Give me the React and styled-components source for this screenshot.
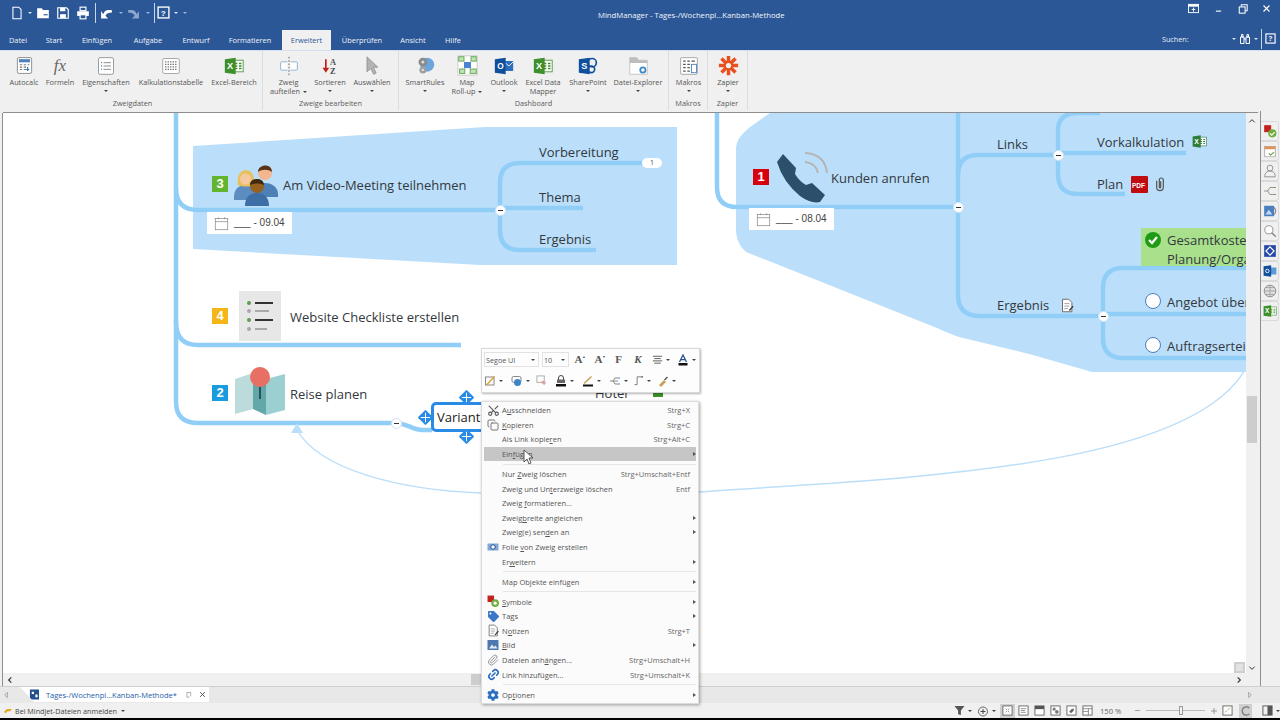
import React from 'react';
import styled, { createGlobalStyle } from 'styled-components';
import { Scissors, Copy, Paperclip, Link2 } from 'lucide-react';
import { FaCog, FaTag } from 'react-icons/fa';

const UI = '"Open Sans", "Noto Sans", sans-serif';
const BLUE = '#2b5797';
const BRANCH = '#90cef8';
const SOFT = '#bcdff9';

let Global = createGlobalStyle`
    html, body { margin: 0; padding: 0; overflow: hidden; background: #000; }
    * { box-sizing: border-box; }
`;

let Page = styled.div`
    position: relative;
    width: 1280px;
    height: 720px;
    display: flex;
    flex-direction: column;
    overflow: hidden;
    font-family: ${UI};
    background: #f0f0f0;
`;

let TitleBar = styled.div`
    height: 25px;
    display: flex;
    align-items: center;
    background: ${BLUE};
    color: #fff;
`;
let Slot = styled.div`
    width: ${p => p.$w}px;
    margin-left: ${p => p.$ml || 0}px;
    display: flex;
    align-items: center;
    justify-content: center;
    gap: ${p => p.$gap ?? 4}px;
    flex: none;
`;
let QatSep = styled.div`
    width: 1px;
    height: 20px;
    margin-left: 2px;
    background: #c9d5e8;
`;
let WindowTitle = styled.div`
    margin-left: 408px;
    width: 190px;
    padding-top: 4px;
    font-size: 7.7px;
    white-space: nowrap;
    color: #f2f5fa;
`;
let WindowBtns = styled.div`
    margin-left: auto;
    align-self: flex-start;
    padding: 3px 3px 0 0;
    display: flex;
    align-items: center;
`;
let Caret = styled.span`
    display: inline-block;
    width: 0;
    height: 0;
    flex: none;
    border-left: 2px solid transparent;
    border-right: 2px solid transparent;
    border-top: 2px solid ${p => p.$c || '#444'};
`;

let TabBar = styled.div`
    height: 25px;
    display: flex;
    align-items: stretch;
    background: ${BLUE};
`;
let Tab = styled.div`
    width: ${p => p.$w}px;
    display: flex;
    align-items: center;
    justify-content: center;
    font-size: 7.4px;
    flex: none;
    color: ${p => (p.$active ? BLUE : '#eef2f8')};
    background: ${p => (p.$active ? '#f0f0f0' : 'transparent')};
    margin-top: ${p => (p.$active ? '5px' : '0')};
    padding-top: ${p => (p.$active ? '0' : '5px')};
`;
let SearchBox = styled.div`
    margin-left: auto;
    display: flex;
    align-items: center;
    padding-top: 2px;
    color: #e8edf6;
    font-size: 7.2px;
    padding-right: 2px;
`;
let SearchLabel = styled.span`
    width: 68px;
`;

let Ribbon = styled.div`
    height: 61px;
    display: flex;
    background: #f0f0f0;
    border-top: 1px solid #d6dfee;
    padding-left: ${p => p.$pl || 0}px;
`;
let Group = styled.div`
    width: ${p => p.$w}px;
    flex: none;
    display: flex;
    flex-direction: column;
    border-right: 1px solid #dcdcdc;
    margin-bottom: 1px;
`;
let GroupItems = styled.div`
    flex: 1;
    display: flex;
    padding-top: 2px;
`;
let GroupLabel = styled.div`
    height: 13px;
    text-align: center;
    font-size: 7.3px;
    color: #5c5c5c;
    line-height: 12px;
`;
let Item = styled.div`
    width: ${p => p.$w}px;
    flex: none;
    display: flex;
    flex-direction: column;
    align-items: center;
    color: #555;
    font-size: 7.3px;
    line-height: 8.6px;
    white-space: nowrap;
    text-align: center;
`;
let ItemIcon = styled.div`
    height: 25px;
    display: flex;
    align-items: center;
    justify-content: center;
`;
let FxMark = styled.span`
    font: italic 17px "Liberation Serif", serif;
    color: #666;
`;
let ItemCaret = styled(Caret)`
    margin-top: 3px;
`;
let InlineCaret = styled(Caret)`
    margin-left: 3px;
    vertical-align: middle;
`;

let Workspace = styled.div`
    height: 575px;
    display: flex;
    background: #f0f0f0;
`;
let LeftEdge = styled.div`
    width: 3px;
    border-right: 1px solid #8e8e8e;
    margin-top: 2px;
`;
let CenterCol = styled.div`
    width: 1243px;
    display: flex;
    flex-direction: column;
`;
let Canvas = styled.div`
    position: relative;
    flex: 1;
    margin-top: 1px;
    border-top: 1px solid #8e8e8e;
    background: #fff;
    overflow: hidden;
`;
let Wires = styled.svg`
    position: absolute;
    left: 0;
    top: 0;
`;
let HScroll = styled.div`
    height: 13px;
    display: flex;
    align-items: center;
    background: #f0f0f0;
    color: #333;
    font-size: 8px;
    padding: 0 2px 0 3px;
`;
let HThumb = styled.div`
    width: 225px;
    height: 11px;
    margin-left: 457px;
    background: #cdcdcd;
`;
let HEnd = styled.div`
    margin-left: auto;
    padding-right: 1px;
    display: flex;
`;
let VScroll = styled.div`
    width: 12px;
    display: flex;
    flex-direction: column;
    align-items: center;
    margin-top: 1px;
    border-top: 1px solid #8e8e8e;
    padding-top: 4px;
    background: #f0f0f0;
`;
let VThumb = styled.div`
    width: 10px;
    height: 47px;
    margin-top: 271px;
    background: #cdcdcd;
`;
let VEnd = styled.div`
    margin-top: auto;
    margin-bottom: 9px;
`;
let SidePanel = styled.div`
    width: 22px;
    display: flex;
    flex-direction: column;
    align-items: flex-end;
    padding: 10px 1px 0 0;
    background: #f0f0f0;
    position: relative;
    box-shadow: inset 2px 0 0 #f0f0f0, inset 3px 0 0 #8e8e8e;
`;
let SideTab = styled.div`
    width: 18px;
    height: 20px;
    display: flex;
    align-items: center;
    justify-content: center;
    border: 1px solid #dadada;
    border-left: none;
    border-radius: 0 3px 3px 0;
`;

let TabStrip = styled.div`
    height: 17px;
    display: flex;
    align-items: center;
    background: #e8e8e8;
    border-top: 1px solid #cfcfcf;
    color: #777;
`;
let StripArrow = styled.div`
    width: 20px;
    padding-left: 2px;
    display: flex;
`;
let DocTab = styled.div`
    width: 189px;
    height: 15px;
    display: flex;
    align-items: center;
    background: #fff;
    padding-left: 9px;
    clip-path: polygon(0 0, 100% 0, 100% 100%, 14px 100%);
    margin-top: -1px;
`;
let DocName = styled.span`
    margin-left: 6px;
    width: 138px;
    font-size: 7.5px;
    color: #1d5ea8;
    white-space: nowrap;
`;
let StripEnd = styled.div`
    margin-left: auto;
    padding-right: 26px;
    display: flex;
`;

let StatusBar = styled.div`
    height: 15px;
    display: flex;
    align-items: center;
    background: #f0f0f0;
    color: #444;
    font-size: 7.2px;
    padding-left: 2px;
`;
let StatusText = styled.span`
    margin-left: 1px;
    margin-right: 4px;
`;
let StatusRight = styled.div`
    margin-left: auto;
    display: flex;
    align-items: center;
`;
let StatusSlot = styled.div`
    width: ${p => p.$w}px;
    height: 14px;
    flex: none;
    display: flex;
    align-items: center;
    justify-content: center;
    gap: 3px;
    background: ${p => (p.$on ? '#cfcfcf' : 'transparent')};
`;
let ZoomText = styled.span`
    width: 33px;
    flex: none;
    color: #666;
    font-size: 7.6px;
`;
let Slider = styled.div`
    position: relative;
    width: 59px;
    height: 1px;
    margin: 0 4px;
    background: #bcbcbc;
`;
let SliderThumb = styled.div`
    position: absolute;
    left: 33px;
    top: -4px;
    width: 4px;
    height: 9px;
    background: #f4f4f4;
    border: 1px solid #999;
`;
let BlackEdge = styled.div`
    height: 2px;
    background: #000;
`;

/* mind map: coordinates are the node places on the free canvas */
let Label = styled.div`
    position: absolute;
    left: ${p => p.$x - 3}px;
    top: ${p => p.$y - 113}px;
    transform: translateY(-50%);
    font-size: 13px;
    color: #33383e;
    white-space: nowrap;
    line-height: 1;
`;
let Pin = styled.div`
    position: absolute;
    left: ${p => p.$x - 3}px;
    top: ${p => p.$y - 113}px;
    line-height: 0;
`;
let Badge = styled(Pin)`
    width: 16px;
    height: 16px;
    display: flex;
    align-items: center;
    justify-content: center;
    background: ${p => p.$bg};
    color: #fff;
    font: bold 13px/16px "Liberation Sans", sans-serif;
`;
let DateBox = styled(Pin)`
    width: 85px;
    height: 22px;
    display: flex;
    align-items: center;
    padding-left: 7px;
    gap: 5px;
    background: #fff;
    font: 10px/1 "Liberation Sans", sans-serif;
    color: #444;
`;
let CountPill = styled(Pin)`
    width: 20px;
    height: 10px;
    border-radius: 5px;
    background: #fff;
    color: #444;
    text-align: center;
    font-size: 7px;
    line-height: 10px;
`;
let GreenBox = styled(Pin)`
    width: 110px;
    height: 38px;
    background: #a9e08c;
`;
let Collapse = styled(Pin)`
    width: 11px;
    height: 11px;
    margin: -5.5px 0 0 -5.5px;
    border-radius: 50%;
    background: #fff;
    border: 1px solid #cfe4f4;
    display: flex;
    align-items: center;
    justify-content: center;
    &::after {
        content: '';
        width: 5px;
        height: 1px;
        background: #333;
    }
`;
let Selected = styled(Pin)`
    width: 72px;
    height: 30px;
    padding-left: 3px;
    border: 3px solid #2a8be6;
    border-radius: 5px;
    background: #fff;
    color: #222;
    font-size: 13px;
    line-height: 24px;
    white-space: nowrap;
    overflow: hidden;
`;
let Handle = styled(Pin)`
    width: 11px;
    height: 11px;
    margin: -5.5px 0 0 -5.5px;
    border-radius: 1px;
    transform: rotate(45deg);
    background: #2a8be6;
    &::before {
        content: '';
        position: absolute;
        left: 2px;
        top: 2px;
        width: 7px;
        height: 7px;
        background: linear-gradient(135deg, transparent 42%, #fff 42%, #fff 58%, transparent 58%),
            linear-gradient(45deg, transparent 42%, #fff 42%, #fff 58%, transparent 58%);
    }
`;
let CornerBox = styled(Pin)`
    width: 11px;
    height: 11px;
    background: #e2e2e2;
    border: 2px solid #cfcfcf;
`;

/* floating format bar and context menu sit over the map */
let MiniBar = styled.div`
    position: absolute;
    left: 481px;
    top: 348px;
    width: 219px;
    height: 45px;
    padding: 2px 2px;
    display: flex;
    flex-direction: column;
    gap: 4px;
    background: #fdfdfd;
    border: 1px solid #d8d8d8;
    box-shadow: 1px 1px 2px rgba(0, 0, 0, .3);
`;
let MiniRow = styled.div`
    height: 17px;
    display: flex;
    align-items: center;
`;
let Combo = styled.div`
    width: ${p => p.$w}px;
    height: 15px;
    margin-right: ${p => p.$mr || 0}px;
    padding: 0 3px 0 1px;
    display: flex;
    align-items: center;
    justify-content: space-between;
    border: 1px solid #e2e2e2;
    font-size: 7.2px;
    color: #555;
    flex: none;
`;
let Tool = styled.div`
    width: ${p => p.$w}px;
    flex: none;
    display: flex;
    align-items: center;
    justify-content: ${p => (p.$start ? 'flex-start' : 'center')};
    gap: 3px;
    color: #555;
    font: bold 11px/1 "Liberation Serif", serif;
`;
let TinyUp = styled.span`
    width: 0;
    height: 0;
    margin: -6px 0 0 -2px;
    border-left: 1.5px solid transparent;
    border-right: 1.5px solid transparent;
    border-bottom: 2px solid #444;
`;
let TinyDown = styled.span`
    width: 0;
    height: 0;
    margin: -6px 0 0 -2px;
    border-left: 1.5px solid transparent;
    border-right: 1.5px solid transparent;
    border-top: 2px solid #444;
`;

let Menu = styled.div`
    position: absolute;
    left: 481px;
    top: 401px;
    width: 218px;
    padding: 1px 2px;
    background: #fbfbfb;
    border: 1px solid #dcdcdc;
    box-shadow: 1px 1px 3px rgba(0, 0, 0, .35);
`;
let Row = styled.div`
    height: 14.6px;
    display: flex;
    align-items: center;
    font-size: 7.5px;
    color: #555;
    white-space: nowrap;
    background: ${p => (p.$hover ? '#c6c6c6' : 'transparent')};
`;
let RowIcon = styled.div`
    width: 18px;
    flex: none;
    display: flex;
    align-items: center;
    justify-content: center;
`;
let RowLabel = styled.span`
    flex: 1;
`;
let RowKey = styled.span`
    color: #666;
`;
let RowArrow = styled.div`
    width: 6px;
    flex: none;
    display: flex;
    justify-content: flex-end;
`;
let ArrowRight = styled.span`
    width: 0;
    height: 0;
    border-top: 2.5px solid transparent;
    border-bottom: 2.5px solid transparent;
    border-left: 3px solid #555;
`;
let MenuSep = styled.div`
    height: 5.4px;
    display: flex;
    align-items: center;
    padding-left: 19px;
    &::after {
        content: '';
        flex: 1;
        height: 1px;
        background: #e6e6e6;
    }
`;
let UpScissors = styled(Scissors)`
    transform: rotate(-90deg);
`;
let SlantLink = styled(Link2)`
    transform: rotate(-45deg);
`;
let Pointer = styled.svg`
    position: absolute;
    left: 523px;
    top: 449px;
`;

function Svg({ s = 20, h, vb = '0 0 24 24', children }) {
    return <svg width={s} height={h || s} viewBox={vb} fill="none">{children}</svg>;
}

function XlsMark({ s = 20, dark = '#3f8f2b' }) {
    return (
        <Svg s={s}>
            <rect x="10" y="5" width="13" height="14" fill="#fff" stroke={dark} />
            <path d="M13 9h3M18 9h3M13 12h3M18 12h3M13 15h3M18 15h3" stroke={dark} strokeWidth="1.6" />
            <path d="M1 4l13-2v20L1 20z" fill={dark} />
            <text x="3.5" y="16" fontSize="11" fontWeight="bold" fontFamily="Liberation Sans" fill="#fff">X</text>
        </Svg>
    );
}

function ribbonIcon(name) {
    switch (name) {
        case 'calc': return (
            <Svg s={19}>
                <rect x="3" y="2" width="18" height="20" rx="2" fill="#fff" stroke="#777" />
                <rect x="5" y="4" width="14" height="4" fill="#4f81bd" />
                <path d="M6 11h3M11 11h3M16 11h2M6 14h3M11 14h3M6 17h3M11 17h3" stroke="#7a7a7a" strokeWidth="1.4" />
                <path d="M16 14v5M14 17h4" stroke="#2a76c8" strokeWidth="1.4" />
            </Svg>
        );
        case 'fx': return <FxMark>fx</FxMark>;
        case 'list': return (
            <Svg s={20}>
                <rect x="3" y="2" width="18" height="20" rx="2" fill="#fff" stroke="#888" />
                <path d="M6 8h1M6 12h1M6 16h1" stroke="#2a76c8" strokeWidth="1.6" />
                <path d="M9 8h9M9 12h9M9 16h9" stroke="#777" />
            </Svg>
        );
        case 'grid': return (
            <Svg s={20}>
                <rect x="2" y="3" width="20" height="18" rx="2" fill="#fff" stroke="#999" />
                <path d="M5 7h14M5 10h14M5 13h14M5 16h14" stroke="#666" strokeWidth="1.3" strokeDasharray="1.5 1.5" />
            </Svg>
        );
        case 'xls': return <XlsMark s={20} />;
        case 'split': return (
            <Svg s={20}>
                <rect x="2" y="7" width="20" height="10" rx="1" stroke="#7fa6cf" fill="#fff" />
                <rect x="10" y="5" width="4" height="14" fill="#f0f0f0" />
                <path d="M12 1v22" stroke="#555" strokeDasharray="2 2" />
            </Svg>
        );
        case 'sort': return (
            <Svg s={20}>
                <path d="M7 4v13" stroke="#c4211d" strokeWidth="2" />
                <path d="M3 14l4 6 4-6z" fill="#c4211d" />
                <text x="12" y="11" fontSize="10" fontFamily="Liberation Serif" fontWeight="bold" fill="#555">A</text>
                <text x="12" y="22" fontSize="10" fontFamily="Liberation Serif" fontWeight="bold" fill="#444">Z</text>
            </Svg>
        );
        case 'pick': return (
            <Svg s={20}>
                <path d="M6 1v18l4.500-4 3.500 7 3-1.500-3.500-7H19z" fill="#b4b4b4" stroke="#8f8f8f" />
            </Svg>
        );
        case 'rules': return (
            <Svg s={21}>
                <circle cx="14" cy="11" r="8" fill="#6ba5dc" />
                <circle cx="9" cy="8" r="5" fill="#8a8a8a" />
                <circle cx="9" cy="8" r="1.800" fill="#ddd" />
                <circle cx="9" cy="17" r="4" fill="#a0a0a0" />
                <circle cx="9" cy="17" r="1.400" fill="#ddd" />
            </Svg>
        );
        case 'rollup': return (
            <Svg s={21}>
                <rect x="1" y="1" width="22" height="22" fill="#fff" stroke="#c6c6c6" />
                <rect x="2" y="2" width="6" height="5" fill="#bfe3b4" stroke="#5ca04c" />
                <rect x="16" y="2" width="6" height="5" fill="#bfe3b4" stroke="#5ca04c" />
                <rect x="3" y="16" width="6" height="5" fill="#bfe3b4" stroke="#5ca04c" />
                <rect x="15" y="16" width="7" height="5" fill="#bfe3b4" stroke="#5ca04c" />
                <rect x="8" y="8" width="8" height="7" fill="#4a86d0" />
            </Svg>
        );
        case 'outlook': return (
            <Svg s={20}>
                <rect x="12" y="6" width="11" height="12" fill="#2d6fb8" />
                <path d="M12 7l6 5 5-5" stroke="#fff" />
                <path d="M1 4l13-2v20L1 20z" fill="#0f4f9c" />
                <text x="4" y="16" fontSize="10" fontWeight="bold" fontFamily="Liberation Sans" fill="#fff">O</text>
            </Svg>
        );
        case 'share': return (
            <Svg s={20}>
                <circle cx="17" cy="8" r="5" stroke="#0f4f9c" strokeWidth="2" />
                <circle cx="16" cy="16" r="4" stroke="#0f4f9c" strokeWidth="2" />
                <path d="M1 4l13-2v20L1 20z" fill="#0f4f9c" />
                <text x="4" y="16" fontSize="11" fontWeight="bold" fontFamily="Liberation Sans" fill="#fff">S</text>
            </Svg>
        );
        case 'folder': return (
            <Svg s={21}>
                <path d="M2 3h8l2 3h10v16H2z" fill="#fff" stroke="#c0c0c0" />
                <path d="M2 3h8l2 3h10v3H2z" fill="#bdbdbd" />
                <circle cx="17" cy="17" r="3" stroke="#3c88c8" strokeWidth="2" />
            </Svg>
        );
        case 'macro': return (
            <Svg s={20}>
                <rect x="2" y="2" width="20" height="20" rx="1" fill="#fff" stroke="#999" />
                <path d="M5 6h3M10 6h3M15 6h4M5 10h3M10 10h3M5 14h3M10 14h3M5 18h3M10 18h3" stroke="#555" strokeWidth="1.500" />
                <rect x="15" y="10" width="6" height="10" fill="#fff" stroke="#3c78c0" />
            </Svg>
        );
        case 'zapier': return (
            <Svg s={21}>
                <path d="M12 1v22M1 12h22M4 4l16 16M20 4L4 20" stroke="#e8511f" strokeWidth="4" />
                <circle cx="12" cy="12" r="3" fill="#f0f0f0" />
            </Svg>
        );
        default: return null;
    }
}

const ribbonGroups = [
    { w: 260, label: 'Zweigdaten', items: [
        { w: 42, icon: 'calc', text: ['Autocalc'] },
        { w: 30, icon: 'fx', text: ['Formeln'] },
        { w: 62, icon: 'list', text: ['Eigenschaften'], caret: true },
        { w: 68, icon: 'grid', text: ['Kalkulationstabelle'] },
        { w: 58, icon: 'xls', text: ['Excel-Bereich'] },
    ] },
    { w: 136, label: 'Zweige bearbeiten', items: [
        { w: 51, icon: 'split', text: ['Zweig', 'aufteilen'], inline: true },
        { w: 32, icon: 'sort', text: ['Sortieren'], caret: true },
        { w: 52, icon: 'pick', text: ['Auswählen'], caret: true },
    ] },
    { w: 270, label: 'Dashboard', items: [
        { w: 52, icon: 'rules', text: ['SmartRules'], caret: true },
        { w: 32, icon: 'rollup', text: ['Map', 'Roll-up'], inline: true },
        { w: 42, icon: 'outlook', text: ['Outlook'], caret: true },
        { w: 36, icon: 'xls', text: ['Excel Data', 'Mapper'] },
        { w: 54, icon: 'share', text: ['SharePoint'], caret: true },
        { w: 46, icon: 'folder', text: ['Datei-Explorer'], caret: true },
    ] },
    { w: 39, label: 'Makros', items: [{ w: 39, icon: 'macro', text: ['Makros'], caret: true }] },
    { w: 40, label: 'Zapier', items: [{ w: 40, icon: 'zapier', text: ['Zapier'], caret: true }] },
];

const tabs = [
    ['Datei', 36], ['Start', 36], ['Einfügen', 50], ['Aufgabe', 52], ['Entwurf', 44], ['Formatieren', 64],
    ['Erweitert', 49, true], ['Überprüfen', 62], ['Ansicht', 40], ['Hilfe', 40],
];

function RibbonGroup({ group }) {
    return (
        <Group $w={group.w}>
            <GroupItems>
                {group.items.map((item) => (
                    <Item key={item.text[0]} $w={item.w}>
                        <ItemIcon>{ribbonIcon(item.icon)}</ItemIcon>
                        {item.text.map((line, i) => (
                            <div key={line}>{line}{item.inline && i === 1 ? <InlineCaret /> : null}</div>
                        ))}
                        {item.caret ? <ItemCaret /> : null}
                    </Item>
                ))}
            </GroupItems>
            <GroupLabel>{group.label}</GroupLabel>
        </Group>
    );
}

function QuickAccess() {
    return (
        <>
            <Slot $w={25} $ml={8}>
                <Svg s={14}><path d="M5 2h10l4 4v16H5z" stroke="#fff" strokeWidth="1.800" /></Svg>
                <Caret $c="#dfe6f2" />
            </Slot>
            <Slot $w={20}>
                <Svg s={14}>
                    <path d="M2 4h8l2 3h10v14H2z" fill="#fff" />
                    <path d="M13 15h7" stroke={BLUE} strokeWidth="2" />
                </Svg>
            </Slot>
            <Slot $w={20}>
                <Svg s={14}>
                    <path d="M3 3h15l3 3v15H3z" stroke="#fff" strokeWidth="2" />
                    <rect x="7" y="3" width="9" height="6" fill="#fff" />
                    <rect x="7" y="14" width="10" height="7" fill="#fff" />
                </Svg>
            </Slot>
            <Slot $w={20}>
                <Svg s={14}>
                    <rect x="7" y="2" width="10" height="6" stroke="#fff" strokeWidth="2" />
                    <rect x="2" y="9" width="20" height="8" fill="#fff" />
                    <rect x="7" y="15" width="10" height="7" fill={BLUE} stroke="#fff" strokeWidth="2" />
                </Svg>
            </Slot>
            <QatSep />
            <Slot $w={28} $ml={1} $gap={6}>
                <Svg s={13}><path d="M22 8C12 6 8 9 6 15l-4-6v14h13l-5-5c2-4 6-6 12-6z" fill="#fff" /></Svg>
                <Caret $c="#9fb4d4" />
            </Slot>
            <Slot $w={27} $gap={6}>
                <Svg s={13}><path d="M2 8c10-2 14 1 16 7l4-6v14H9l5-5c-2-4-6-6-12-6z" fill="#8ea6cb" /></Svg>
                <Caret $c="#9fb4d4" />
            </Slot>
            <QatSep />
            <Slot $w={25}>
                <Svg s={13}>
                    <rect x="2" y="2" width="20" height="20" stroke="#fff" strokeWidth="2.500" />
                    <text x="7" y="18" fontSize="15" fontWeight="bold" fontFamily="Liberation Sans" fill="#fff">?</text>
                </Svg>
                <Caret $c="#dfe6f2" />
            </Slot>
            <Slot $w={10}><Caret $c="#9fb4d4" /></Slot>
        </>
    );
}

function WindowControls() {
    return (
        <WindowBtns>
            <Slot $w={25}>
                <Svg s={11}>
                    <rect x="1" y="3" width="22" height="18" stroke="#fff" strokeWidth="2" />
                    <rect x="1" y="3" width="22" height="5" fill="#fff" />
                    <path d="M12 10v9M8 14h8" stroke="#fff" strokeWidth="2" />
                </Svg>
            </Slot>
            <Slot $w={25}><Svg s={9}><path d="M5 19h14" stroke="#fff" strokeWidth="3" /></Svg></Slot>
            <Slot $w={24}>
                <Svg s={10}>
                    <path d="M8 6V2h14v14h-5" stroke="#fff" strokeWidth="2.500" />
                    <rect x="3" y="7" width="14" height="15" stroke="#fff" strokeWidth="2.500" />
                </Svg>
            </Slot>
            <Slot $w={22}><Svg s={9}><path d="M4 4l16 16M20 4L4 20" stroke="#fff" strokeWidth="3" /></Svg></Slot>
        </WindowBtns>
    );
}

function Calendar() {
    return (
        <Svg s={15}>
            <rect x="2" y="4" width="20" height="18" stroke="#777" />
            <path d="M2 9h20M7 2v3M17 2v3" stroke="#777" />
        </Svg>
    );
}

function People() {
    return (
        <Svg s={46} h={42} vb="0 0 46 42">
            <path d="M22 30c0-8 5-11 10-11s13 3 13 11v3H22z" fill="#4d80b5" />
            <circle cx="32" cy="9" r="7" fill="#f2b78f" />
            <path d="M25 8c0-8 14-9 14 0-4-3-10-3-14 0z" fill="#5a3418" />
            <path d="M1 33c0-8 5-12 11-12s11 4 11 12v3H1z" fill="#5b8dc0" />
            <path d="M5 21c-2-11 4-15 8-15s10 4 7 15c-4 2-11 2-15 0z" fill="#e6c15b" />
            <circle cx="12.500" cy="15" r="5.500" fill="#f6c8a0" />
            <path d="M12 42c0-9 5-13 12-13s12 4 12 13z" fill="#3d6ea6" />
            <circle cx="24" cy="22" r="7" fill="#94611f" />
            <path d="M17 21c0-8 14-8 14 0-4-2-10-2-14 0z" fill="#3f2a10" />
        </Svg>
    );
}

function Checklist() {
    return (
        <svg width="42" height="50" viewBox="0 0 42 50">
            <rect width="42" height="50" fill="#e7e7e7" />
            <circle cx="10" cy="12" r="2" fill="#5a9e4e" />
            <circle cx="10" cy="20" r="2" fill="#a9a9a9" />
            <circle cx="10" cy="29" r="2" fill="#5a9e4e" />
            <circle cx="10" cy="38" r="2" fill="#a9a9a9" />
            <path d="M16 12h18M16 29h18" stroke="#333" strokeWidth="1.800" />
            <path d="M16 20h14M16 38h12" stroke="#a9a9a9" strokeWidth="1.800" />
        </svg>
    );
}

function MapPin() {
    return (
        <svg width="50" height="48" viewBox="0 0 50 48">
            <path d="M0 12l18-6v36L0 47z" fill="#bcdcdc" />
            <path d="M18 6l13 6v36l-13-6z" fill="#62a8a8" />
            <path d="M31 12l19-5v36l-19 5z" fill="#9ccfd2" />
            <path d="M25 18v14" stroke="#2d4f5a" strokeWidth="2" />
            <circle cx="25" cy="10" r="10" fill="#e76f63" />
        </svg>
    );
}

function Phone() {
    return (
        <svg width="54" height="52" viewBox="0 0 54 52">
            <path d="M8 2L21 16l-1 6q4 7 11 11l6-2 13 12-5 7q-9 2-20-6Q8 30 2 10z" fill="#2c4f6b" />
            <path d="M30 1q20 1 22 20M30 10q11 1 13 11" stroke="#b5b5b5" strokeWidth="2" fill="none" />
        </svg>
    );
}

function Note({ s = 15 }) {
    return (
        <Svg s={s}>
            <path d="M4 2h10l5 5v15H4z" fill="#fff" stroke="#666" strokeWidth="1.500" />
            <path d="M7 9h8M7 13h8M7 17h6" stroke="#666" />
            <path d="M15 20l6-7" stroke="#333" strokeWidth="2" />
        </Svg>
    );
}

function Clip() {
    return (
        <Svg s={16}>
            <path d="M7 7v10a5 5 0 0 0 10 0V6a3 3 0 0 0-6 0v11a1 1 0 0 0 2 0V8" stroke="#555" strokeWidth="1.800" />
        </Svg>
    );
}

function Pdf() {
    return (
        <svg width="17" height="17" viewBox="0 0 17 17">
            <rect width="17" height="17" rx="1" fill="#c00d12" />
            <text x="1" y="11.500" fontSize="6.500" fontWeight="bold" fontFamily="Liberation Sans" fill="#fff">PDF</text>
        </svg>
    );
}

function Circle() {
    return <svg width="16" height="16"><circle cx="8" cy="8" r="7.500" fill="#fff" stroke="#4a7fc0" /></svg>;
}

function CheckDot() {
    return (
        <svg width="16" height="16" viewBox="0 0 16 16">
            <circle cx="8" cy="8" r="8" fill="#1f9a14" />
            <path d="M4 8l3 3 5-6" stroke="#fff" strokeWidth="2.200" fill="none" />
        </svg>
    );
}

function MindMap() {
    return (
        <Canvas>
            <Wires width="1243" height="560" viewBox="3 113 1243 560" fill="none">
                <path d="M193 146L485 127H677V265H480L193 249Z" fill="#bbdffa" />
                <path d="M770 113L750 127Q736 138 736 148V232Q737 244 746 252L937 328Q950 334 959 337L1033 355L1092 372H1246V113Z" fill="#bbdffa" />
                <g stroke={BRANCH} strokeWidth="4.500">
                    <path d="M176 113V188Q176 210 198 210H500" />
                    <path d="M176 188V322Q176 345 198 345H461" />
                    <path d="M176 320V402Q176 423 198 423H396" />
                    <path d="M396 423C412 424 408 431 432 430" />
                    <path d="M520 163H650M500 208V183Q500 163 520 163M500 208H583M500 208V230Q500 250 520 250H596" />
                    <path d="M717 113V187Q717 207 737 207H958" />
                    <path d="M958 113V295Q958 316 980 316H1103" />
                    <path d="M958 175Q958 155 978 155H1058" />
                    <path d="M1058 130V174Q1058 194 1078 194H1125" />
                    <path d="M1058 130Q1058 114 1076 113H1100M1058 153H1186" />
                    <path d="M1103 316V288Q1103 268 1123 268H1246M1103 314H1246M1103 316V338Q1103 358 1123 358H1246" />
                </g>
                <path d="M566 402H587" stroke={SOFT} strokeWidth="2" />
                <path d="M653 392h10v5h-10z" fill="#3f8f2b" />
                <path d="M481 493C400 490 320 470 297 430" stroke={SOFT} strokeWidth="1.500" />
                <path d="M291 433H303L297 423Z" fill={SOFT} />
                <path d="M699 492C900 478 1190 470 1246 368" stroke={SOFT} strokeWidth="1.500" />
            </Wires>

            <Badge $x={212} $y={176} $bg="#63b52f">3</Badge>
            <Pin $x={233} $y={164}><People /></Pin>
            <Label $x={283} $y={185}>Am Video-Meeting teilnehmen</Label>
            <DateBox $x={207} $y={212}><Calendar />___ - 09.04</DateBox>
            <Label $x={539} $y={152}>Vorbereitung</Label>
            <CountPill $x={642} $y={158}>1</CountPill>
            <Label $x={539} $y={197}>Thema</Label>
            <Label $x={539} $y={239}>Ergebnis</Label>
            <Collapse $x={500} $y={210} />

            <Badge $x={212} $y={308} $bg="#f4b619">4</Badge>
            <Pin $x={239} $y={291}><Checklist /></Pin>
            <Label $x={290} $y={317}>Website Checkliste erstellen</Label>

            <Badge $x={212} $y={385} $bg="#1b9be0">2</Badge>
            <Pin $x={235} $y={367}><MapPin /></Pin>
            <Label $x={290} $y={394}>Reise planen</Label>
            <Collapse $x={396} $y={423} />
            <Selected $x={431} $y={402}>Variante</Selected>
            <Handle $x={466} $y={397} />
            <Handle $x={466} $y={436} />
            <Handle $x={425} $y={417} />
            <Label $x={595} $y={393}>Hotel</Label>

            <Badge $x={753} $y={169} $bg="#d7000f">1</Badge>
            <Pin $x={775} $y={152}><Phone /></Pin>
            <Label $x={831} $y={178}>Kunden anrufen</Label>
            <DateBox $x={749} $y={208}><Calendar />___ - 08.04</DateBox>
            <Collapse $x={958} $y={207} />
            <Label $x={997} $y={144}>Links</Label>
            <Collapse $x={1058} $y={155} />
            <Label $x={1097} $y={142}>Vorkalkulation</Label>
            <Pin $x={1192} $y={134}><XlsMark s={15} dark="#2f7d3a" /></Pin>
            <Label $x={1097} $y={184}>Plan</Label>
            <Pin $x={1131} $y={176}><Pdf /></Pin>
            <Pin $x={1152} $y={176}><Clip /></Pin>
            <Label $x={997} $y={305}>Ergebnis</Label>
            <Pin $x={1060} $y={298}><Note /></Pin>
            <Collapse $x={1103} $y={316} />
            <GreenBox $x={1141} $y={228} />
            <Pin $x={1145} $y={232}><CheckDot /></Pin>
            <Label $x={1167} $y={240}>Gesamtkosten</Label>
            <Label $x={1167} $y={259}>Planung/Organisation</Label>
            <Pin $x={1145} $y={293}><Circle /></Pin>
            <Label $x={1167} $y={302}>Angebot über</Label>
            <Pin $x={1145} $y={337}><Circle /></Pin>
            <Label $x={1167} $y={346}>Auftragserteilung</Label>
            <CornerBox $x={1234} $y={662} />
        </Canvas>
    );
}

function sideIcon(i) {
    switch (i) {
        case 0: return (
            <Svg s={14}>
                <rect x="2" y="2" width="12" height="12" fill="#c4211d" />
                <circle cx="16" cy="16" r="7" fill="#6fae3f" />
                <path d="M12 16l3 3 5-5" stroke="#fff" strokeWidth="2" />
            </Svg>
        );
        case 1: return (
            <Svg s={14}>
                <rect x="3" y="4" width="18" height="18" stroke="#888" fill="#fff" />
                <rect x="3" y="4" width="18" height="5" fill="#e0935a" />
                <path d="M10 16l3 3 6-5" stroke="#5aa03c" strokeWidth="2" />
            </Svg>
        );
        case 2: return (
            <Svg s={14}>
                <circle cx="12" cy="7" r="5" stroke="#888" strokeWidth="1.500" />
                <path d="M3 22c0-7 4-10 9-10s9 3 9 10z" stroke="#888" strokeWidth="1.500" />
            </Svg>
        );
        case 3: return (
            <Svg s={14}>
                <path d="M2 12h6M8 12l4-6h6M8 12l4 6h6" stroke="#888" strokeWidth="1.500" />
                <path d="M18 6h4M18 18h4" stroke="#5aa03c" strokeWidth="2" />
            </Svg>
        );
        case 4: return (
            <Svg s={14}>
                <rect x="2" y="3" width="17" height="18" fill="#4a7fc0" />
                <path d="M4 18l6-8 6 8z" fill="#c8d9ef" />
                <path d="M19 6a8 8 0 0 1 0 12" stroke="#888" strokeWidth="2" />
            </Svg>
        );
        case 5: return (
            <Svg s={14}>
                <circle cx="10" cy="10" r="7" stroke="#888" strokeWidth="1.500" fill="#fff" />
                <path d="M15 15l7 7" stroke="#888" strokeWidth="2.500" />
            </Svg>
        );
        case 6: return (
            <Svg s={14}>
                <rect x="2" y="2" width="20" height="20" fill="#2647a8" />
                <path d="M12 5l7 7-7 7-7-7z" stroke="#fff" strokeWidth="2" />
            </Svg>
        );
        case 7: return (
            <Svg s={14}>
                <rect x="12" y="6" width="11" height="12" fill="#5b9bd8" />
                <path d="M1 4l13-2v20L1 20z" fill="#0f4f9c" />
                <circle cx="7.500" cy="12" r="3" stroke="#fff" strokeWidth="1.500" />
            </Svg>
        );
        case 8: return (
            <Svg s={14}>
                <circle cx="12" cy="12" r="10" stroke="#888" strokeWidth="1.500" fill="#ddd" />
                <path d="M2 12h20M12 2v20M5 6h14M5 18h14" stroke="#888" />
            </Svg>
        );
        default: return <XlsMark s={14} />;
    }
}

const menuItems = [
    { label: <>A<u>u</u>sschneiden</>, key: 'Strg+X', icon: <UpScissors size={13} color="#555" /> },
    { label: <><u>K</u>opieren</>, key: 'Strg+C', icon: <Copy size={12} color="#777" /> },
    { label: <>Als Link kopie<u>r</u>en</>, key: 'Strg+Alt+C' },
    { label: <>Ein<u>f</u>ügen</>, arrow: true, hover: true },
    'sep',
    { label: <>Nur <u>Z</u>weig löschen</>, key: 'Strg+Umschalt+Entf' },
    { label: <>Zweig und Un<u>t</u>erzweige löschen</>, key: 'Entf' },
    { label: <>Zweig <u>f</u>ormatieren...</> },
    { label: <>Zweig<u>b</u>reite angleichen</>, arrow: true },
    { label: <>Zweig(e) sen<u>d</u>en an</>, arrow: true },
    { label: <>Folie <u>v</u>on Zweig erstellen</>, icon: <Svg s={12}><rect x="1" y="5" width="22" height="14" rx="1" fill="#7fa8da" /><circle cx="12" cy="12" r="4.500" fill="#fff" stroke="#24508e" strokeWidth="2" /></Svg> },
    { label: <>Er<u>w</u>eitern</>, arrow: true },
    'sep',
    { label: <>Map Objekte einfü<u>g</u>en</>, arrow: true },
    'sep',
    { label: <><u>S</u>ymbole</>, arrow: true, icon: <Svg s={13}><rect x="1" y="1" width="12" height="12" fill="#c4211d" /><circle cx="15" cy="15" r="7" fill="#6fae3f" /><circle cx="15" cy="15" r="3" fill="#fff" /></Svg> },
    { label: <>Ta<u>g</u>s</>, arrow: true, icon: <FaTag size={11} color="#3d78c8" /> },
    { label: <>N<u>o</u>tizen</>, key: 'Strg+T', icon: <Note s={13} /> },
    { label: <><u>B</u>ild</>, arrow: true, icon: <Svg s={12}><rect x="1" y="2" width="22" height="20" fill="#4d78b0" /><path d="M4 19l6-8 4 5 3-3 4 6z" fill="#dfe9f6" /></Svg> },
    { label: <>Dateien anh<u>ä</u>ngen...</>, key: 'Strg+Umschalt+H', icon: <Paperclip size={12} color="#999" /> },
    { label: <>Link hinzufü<u>g</u>en...</>, key: 'Strg+Umschalt+K', icon: <SlantLink size={13} color="#2c6fc0" strokeWidth={3} /> },
    'sep',
    { label: <>Op<u>t</u>ionen</>, arrow: true, icon: <FaCog size={12} color="#2c6fc0" /> },
];

function ContextMenu() {
    return (
        <Menu>
            {menuItems.map((item, i) => (
                item === 'sep'
                ? <MenuSep key={i} />
                : (
                    <Row key={i} $hover={item.hover}>
                        <RowIcon>{item.icon}</RowIcon>
                        <RowLabel>{item.label}</RowLabel>
                        {item.key ? <RowKey>{item.key}</RowKey> : null}
                        <RowArrow>{item.arrow ? <ArrowRight /> : null}</RowArrow>
                    </Row>
                )
            ))}
        </Menu>
    );
}

function FormatBar() {
    return (
        <MiniBar>
            <MiniRow>
                <Combo $w={55} $mr={3}>Segoe UI<Caret /></Combo>
                <Combo $w={27}>10<Caret /></Combo>
                <Tool $w={22}>A<TinyUp /></Tool>
                <Tool $w={18}>A<TinyDown /></Tool>
                <Tool $w={19}>F</Tool>
                <Tool $w={20}><i>K</i></Tool>
                <Tool $w={26}>
                    <Svg s={11}><path d="M2 5h20M5 10h14M2 15h20M5 20h14" stroke="#555" strokeWidth="2" /></Svg>
                    <Caret />
                </Tool>
                <Tool $w={24}>
                    <Svg s={12}>
                        <path d="M5 16L12 2l7 14M8 11h8" stroke="#24508e" strokeWidth="2.500" />
                        <rect x="3" y="18" width="18" height="5" fill="#111" />
                    </Svg>
                    <Caret />
                </Tool>
            </MiniRow>
            <MiniRow>
                <Tool $w={24} $start>
                    <Svg s={12}><rect x="3" y="4" width="17" height="16" stroke="#888" strokeWidth="2" /><path d="M5 20L21 3" stroke="#d9a53c" strokeWidth="3" /></Svg>
                    <Caret />
                </Tool>
                <Tool $w={25}>
                    <Svg s={12}><rect x="2" y="3" width="18" height="12" rx="3" stroke="#888" strokeWidth="2" /><circle cx="13" cy="15" r="7" fill="#3d83c8" /></Svg>
                    <Caret />
                </Tool>
                <Tool $w={17}>
                    <Svg s={11}><rect x="2" y="2" width="16" height="14" stroke="#aaa" strokeWidth="2" /><path d="M10 16l8 6 4-5-6-5z" fill="#d9a0a0" /></Svg>
                </Tool>
                <Tool $w={28}>
                    <Svg s={12}><path d="M7 12V6a5 5 0 0 1 10 0v6" stroke="#444" strokeWidth="2" /><rect x="4" y="9" width="16" height="7" fill="#666" /><rect x="2" y="18" width="20" height="5" fill="#111" /></Svg>
                    <Caret />
                </Tool>
                <Tool $w={27}>
                    <Svg s={12}><path d="M4 17L19 3" stroke="#c9a25a" strokeWidth="3" /><rect x="2" y="19" width="20" height="4" fill="#111" /></Svg>
                    <Caret />
                </Tool>
                <Tool $w={26}>
                    <Svg s={12}><path d="M2 12h6M8 12l4-6h6M8 12l4 6h6M8 12h10" stroke="#888" strokeWidth="2" /><path d="M18 6h4M18 18h4" stroke="#3d83c8" strokeWidth="2" /></Svg>
                    <Caret />
                </Tool>
                <Tool $w={22}>
                    <Svg s={11}><path d="M3 21h6V4h12" stroke="#777" strokeWidth="2" /><circle cx="20" cy="4" r="2" fill="#777" /></Svg>
                    <Caret />
                </Tool>
                <Tool $w={26}>
                    <Svg s={12}><path d="M4 20l10-10 4 4-10 10z" fill="#c9a25a" /><path d="M14 9l6-6 2 2-6 6z" fill="#555" /></Svg>
                    <Caret />
                </Tool>
            </MiniRow>
        </MiniBar>
    );
}

function StatusIcons() {
    const box = (inner) => <Svg s={11}><rect x="2" y="2" width="20" height="20" stroke="#666" strokeWidth="2" fill="#fff" />{inner}</Svg>;
    return (
        <StatusRight>
            <StatusSlot $w={20}><Svg s={11}><path d="M1 2h22l-8 10v10l-6-2v-8z" fill="#555" /></Svg><Caret /></StatusSlot>
            <StatusSlot $w={27}><Svg s={12}><circle cx="12" cy="13" r="9" stroke="#666" strokeWidth="2" /><path d="M12 8v10M7 13h10" stroke="#444" strokeWidth="2" /></Svg><Caret /></StatusSlot>
            <StatusSlot $w={15} $on>{box(<path d="M8 8l3 3M16 8l-3 3M8 16l3-3M16 16l-3-3" stroke="#666" strokeWidth="1.500" />)}</StatusSlot>
            <StatusSlot $w={16}>{box(<path d="M6 8h12M6 12h9M6 16h11" stroke="#666" strokeWidth="1.500" />)}</StatusSlot>
            <StatusSlot $w={16}>{box(<rect x="2" y="2" width="20" height="7" fill="#555" />)}</StatusSlot>
            <StatusSlot $w={16}>{box(<><rect x="6" y="6" width="6" height="6" fill="#777" /><circle cx="15" cy="15" r="4" fill="#777" /></>)}</StatusSlot>
            <StatusSlot $w={16}>{box(<path d="M7 14l6-6h4v4l-6 6z" fill="#666" />)}</StatusSlot>
            <StatusSlot $w={16}>{box(<path d="M2 8h20M2 14h12M14 8v14" stroke="#666" strokeWidth="1.500" />)}</StatusSlot>
            <StatusSlot $w={5} />
            <ZoomText>150 %</ZoomText>
            <StatusSlot $w={9}><Svg s={7}><path d="M3 12h18" stroke="#888" strokeWidth="2.500" /></Svg></StatusSlot>
            <Slider><SliderThumb /></Slider>
            <StatusSlot $w={9}><Svg s={8}><path d="M3 12h18M12 3v18" stroke="#888" strokeWidth="2.500" /></Svg></StatusSlot>
            <StatusSlot $w={18}>{box(<path d="M7 16l4-4M13 10l4-4" stroke="#7aa05a" strokeWidth="2" />)}</StatusSlot>
            <StatusSlot $w={3} />
            <StatusSlot $w={13} $on><Svg s={10}><path d="M20 5a10 10 0 1 0 0 14" stroke="#777" strokeWidth="3" /></Svg></StatusSlot>
            <StatusSlot $w={9} />
            <StatusSlot $w={19}>
                <Svg s={11}><rect x="2" y="2" width="20" height="20" stroke="#555" strokeWidth="2" /><rect x="12" y="2" width="10" height="20" fill="#555" /></Svg>
                <Caret />
            </StatusSlot>
        </StatusRight>
    );
}

function App() {
    return (
        <Page>
            <Global />
            <TitleBar>
                <QuickAccess />
                <WindowTitle>MindManager - Tages-/Wochenpl...Kanban-Methode</WindowTitle>
                <WindowControls />
            </TitleBar>

            <TabBar>
                {tabs.map(([name, w, active]) => <Tab key={name} $w={w} $active={active}>{name}</Tab>)}
                <SearchBox>
                    <SearchLabel>Suchen:</SearchLabel>
                    <Slot $w={8}><Caret $c="#dfe6f2" /></Slot>
                    <Slot $w={21} $gap={3}>
                        <Svg s={12}><path d="M3 8h7v13H3zM14 8h7v13h-7zM5 3h3v5H5zM16 3h3v5h-3zM10 12h4" stroke="#fff" strokeWidth="2" /></Svg>
                        <Caret $c="#dfe6f2" />
                    </Slot>
                    <QatSep />
                    <Slot $w={16}>
                        <Svg s={11}>
                            <rect x="2" y="2" width="20" height="20" stroke="#fff" strokeWidth="2.500" />
                            <text x="7" y="18" fontSize="15" fontWeight="bold" fontFamily="Liberation Sans" fill="#fff">?</text>
                        </Svg>
                    </Slot>
                </SearchBox>
            </TabBar>

            <Ribbon $pl={3}>
                {ribbonGroups.map((group) => <RibbonGroup key={group.label} group={group} />)}
            </Ribbon>

            <Workspace>
                <LeftEdge />
                <CenterCol>
                    <MindMap />
                    <HScroll>
                        <Svg s={8}><path d="M16 4l-8 8 8 8" stroke="#333" strokeWidth="3.500" /></Svg>
                        <HThumb />
                        <HEnd><Svg s={8}><path d="M8 4l8 8-8 8" stroke="#333" strokeWidth="3.500" /></Svg></HEnd>
                    </HScroll>
                </CenterCol>
                <VScroll>
                    <Svg s={8}><path d="M4 16l8-8 8 8" stroke="#333" strokeWidth="3" /></Svg>
                    <VThumb />
                    <VEnd><Svg s={8}><path d="M4 8l8 8 8-8" stroke="#333" strokeWidth="3" /></Svg></VEnd>
                </VScroll>
                <SidePanel>
                    {Array.from({ length: 10 }).map((_, i) => <SideTab key={i}>{sideIcon(i)}</SideTab>)}
                </SidePanel>
            </Workspace>

            <TabStrip>
                <StripArrow><Svg s={8}><path d="M16 4l-8 8 8 8z" stroke="#888" strokeWidth="2" /></Svg></StripArrow>
                <DocTab>
                    <Svg s={11}><rect x="2" y="1" width="20" height="22" fill="#24508e" /><path d="M6 6h5v5H6zM14 12h5v6h-5z" fill="#fff" /></Svg>
                    <DocName>Tages-/Wochenpl...Kanban-Methode*</DocName>
                    <Slot $w={13}><Svg s={7}><path d="M3 5h13v13M3 5v16h9" stroke="#777" strokeWidth="2" /></Svg></Slot>
                    <Slot $w={13}><Svg s={7}><path d="M4 4l16 16M20 4L4 20" stroke="#444" strokeWidth="3" /></Svg></Slot>
                </DocTab>
                <StripEnd><Svg s={8}><path d="M8 4l8 8-8 8z" stroke="#888" strokeWidth="2" /></Svg></StripEnd>
            </TabStrip>

            <StatusBar>
                <Svg s={12} h={9}><path d="M1 16l8-8h13l-4 6H11l-5 5z" fill="#e2a81f" /></Svg>
                <StatusText>Bei Mindjet-Dateien anmelden</StatusText>
                <Caret />
                <StatusIcons />
            </StatusBar>
            <BlackEdge />

            <FormatBar />
            <ContextMenu />
            <Pointer width="12" height="16" viewBox="0 0 12 16">
                <path d="M1 1v12l3-3 2 5 2-1-2-5h4z" fill="#fff" stroke="#333" strokeWidth=".8" />
            </Pointer>
        </Page>
    );
}

export default App;
